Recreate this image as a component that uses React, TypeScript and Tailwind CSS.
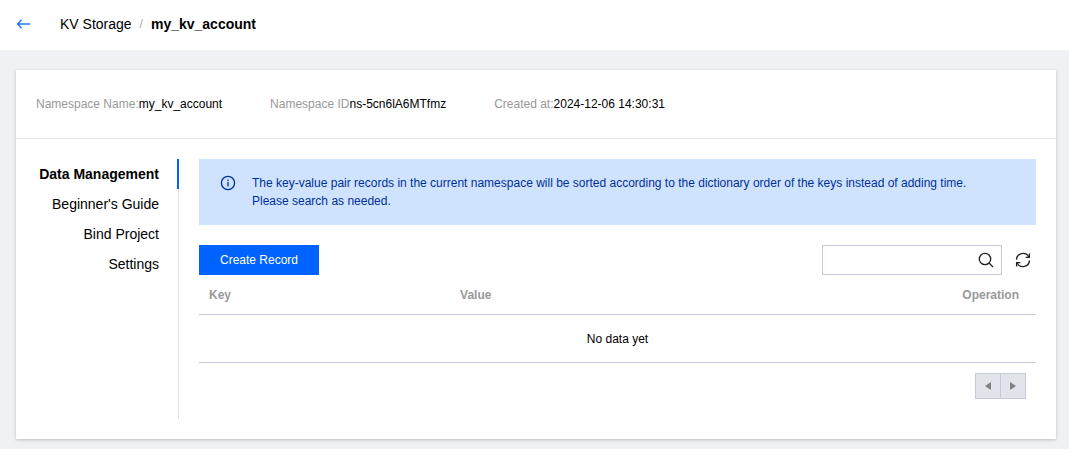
import clsx from "clsx";

const DETAILS = [
  { label: "Namespace Name:", value: "my_kv_account" },
  { label: "Namespace ID", value: "ns-5cn6lA6MTfmz" },
  { label: "Created at:", value: "2024-12-06 14:30:31" },
];

const TABS = [
  { label: "Data Management", active: true },
  { label: "Beginner's Guide", active: false },
  { label: "Bind Project", active: false },
  { label: "Settings", active: false },
];

function BackIcon() {
  return (
    <svg width="16" height="16" viewBox="0 0 16 16" fill="none" stroke="currentColor" strokeWidth="1.6" aria-hidden="true">
      <path d="M14 8H2M5.6 3.8L1.6 8L5.6 12.2" />
    </svg>
  );
}

function InfoIcon() {
  return (
    <svg className="shrink-0" width="16" height="16" viewBox="0 0 16 16" fill="none" stroke="currentColor" strokeWidth="1.3" aria-hidden="true">
      <circle cx="8" cy="8" r="6.6" />
      <path d="M8 7V11.5M8 4.4V5.9" />
    </svg>
  );
}

function SearchIcon() {
  return (
    <svg width="16" height="16" viewBox="0 0 16 16" fill="none" stroke="currentColor" strokeWidth="1.3" aria-hidden="true">
      <circle cx="7" cy="7" r="5.7" />
      <path d="M11 11L15 15" />
    </svg>
  );
}

function RefreshIcon() {
  return (
    <svg width="16" height="16" viewBox="0 0 16 16" fill="none" stroke="currentColor" strokeWidth="1.3" aria-hidden="true">
      <path d="M1.5 7.6A6.5 6.5 0 0 1 13.8 5M14.5 8.4A6.5 6.5 0 0 1 2.2 11" />
      <path d="M14.4 1.6V5.3H10.6M1.6 14.4V10.7H5.4" />
    </svg>
  );
}

export default function App() {
  return (
    <div className="flex min-h-screen flex-col bg-[#f0f1f5] font-['Liberation_Sans',Arial,sans-serif] text-xs leading-[18px] text-black">
      <header className="flex h-[50px] items-center bg-white px-4 pb-0.5 text-sm">
        <button type="button" aria-label="Back" className="mr-7 text-[#2b7bff]">
          <BackIcon />
        </button>
        <nav aria-label="Breadcrumb" className="flex items-center gap-2">
          <a href="#storage">KV Storage</a>
          <span className="text-xs text-[#aaa]">/</span>
          <h1 className="font-bold">my_kv_account</h1>
        </nav>
      </header>

      <main className="pt-5 pr-[13px] pb-2.5 pl-4">
        <div className="bg-white shadow-[0_1px_3px_rgba(54,58,80,0.28)]">
          {/* Namespace details */}
          <dl className="flex gap-12 border-b border-[#dfe4ee] px-5 py-[25px]">
            {DETAILS.map((item) => (
              <div key={item.label} className="flex">
                <dt className="text-[#999]">{item.label}</dt>
                <dd>{item.value}</dd>
              </div>
            ))}
          </dl>

          <div className="flex gap-5 p-5">
            {/* Side tabs */}
            <nav aria-label="Sections" className="flex min-h-[260px] w-[143px] shrink-0 flex-col border-r border-[#e0e2ea] text-right text-sm">
              {TABS.map((tab) => (
                <a
                  key={tab.label}
                  href="#section"
                  className={clsx(
                    "-mr-px border-r-2 pr-[18px] leading-[30px] whitespace-nowrap",
                    tab.active ? "border-[#0062ff] font-bold" : "border-transparent"
                  )}
                >
                  {tab.label}
                </a>
              ))}
            </nav>

            <section className="min-w-0 flex-1">
              <div role="note" className="flex items-start gap-4 bg-[#cfe3ff] py-[15px] pr-10 pl-[21px] text-[#003097]">
                <span className="mt-px">
                  <InfoIcon />
                </span>
                <p>
                  The key-value pair records in the current namespace will be sorted according to the dictionary order of the keys
                  instead of adding time. Please search as needed.
                </p>
              </div>

              {/* Toolbar */}
              <div className="mt-5 flex items-center justify-between">
                <button type="button" className="h-[30px] w-[120px] bg-[#0062ff] text-white">
                  Create Record
                </button>
                <div className="flex items-center gap-[13px] pr-[5px]">
                  <div className="flex h-[30px] w-[180px] items-center border border-[#c5cbdb] pr-[7px] text-[#222]">
                    <input type="text" aria-label="Search records" className="h-full min-w-0 flex-1 px-2 outline-none" />
                    <button type="button" aria-label="Search">
                      <SearchIcon />
                    </button>
                  </div>
                  <button type="button" aria-label="Refresh" className="text-[#222]">
                    <RefreshIcon />
                  </button>
                </div>
              </div>

              <table className="w-full table-fixed border-separate border-spacing-0">
                <thead>
                  <tr className="h-10 text-left text-[#999]">
                    <th scope="col" className="w-[30%] border-b border-[#c5cbdb] px-2.5">Key</th>
                    <th scope="col" className="w-[60%] border-b border-[#c5cbdb] px-2.5">Value</th>
                    <th scope="col" className="w-[10%] border-b border-[#c5cbdb] px-2.5">Operation</th>
                  </tr>
                </thead>
                <tbody>
                  <tr className="h-12 text-center">
                    <td colSpan={3} className="border-b border-[#c5cbdb]">No data yet</td>
                  </tr>
                </tbody>
              </table>

              {/* Pagination */}
              <div className="mt-2.5 flex justify-end pr-2.5 text-[#808080]">
                <button type="button" aria-label="Previous page" className="flex size-[26px] items-center justify-center border border-[#c5cbdb] bg-[#e1e4eb]">
                  <svg width="6" height="8" viewBox="0 0 6 8" fill="currentColor" aria-hidden="true">
                    <path d="M6 0V8L0 4Z" />
                  </svg>
                </button>
                <button type="button" aria-label="Next page" className="-ml-px flex size-[26px] items-center justify-center border border-[#c5cbdb] bg-[#e1e4eb]">
                  <svg width="6" height="8" viewBox="0 0 6 8" fill="currentColor" aria-hidden="true">
                    <path d="M0 0V8L6 4Z" />
                  </svg>
                </button>
              </div>
            </section>
          </div>
        </div>
      </main>
    </div>
  );
}
